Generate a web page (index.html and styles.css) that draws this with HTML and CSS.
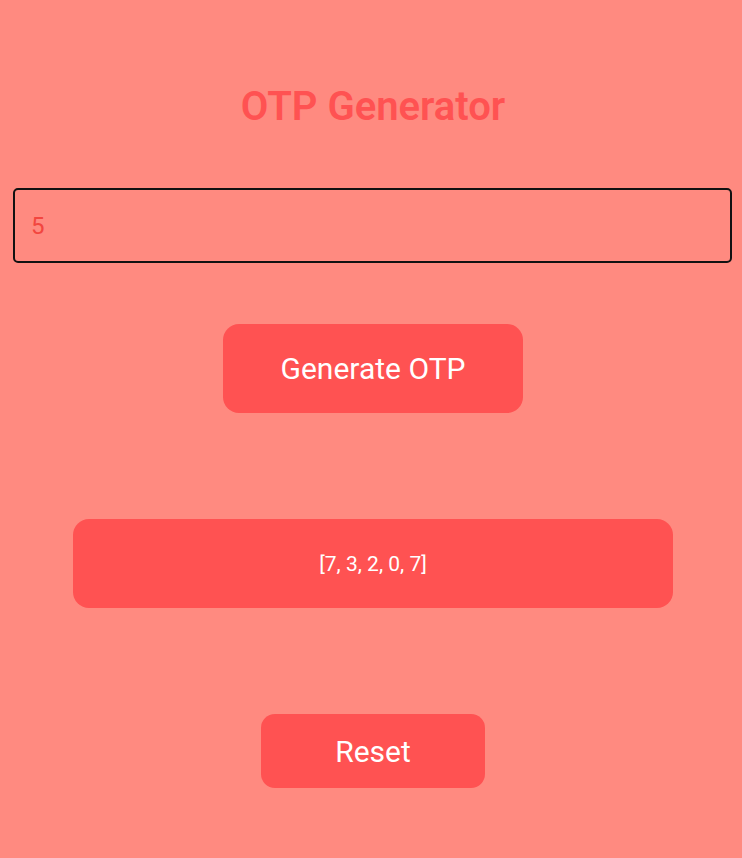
FILE: index.html
```html
<!DOCTYPE html>
<html lang="en">
<head>
<meta charset="utf-8">
<title>OTP Generator</title>
<link rel="stylesheet" href="styles.css">
</head>
<body>
  <main class="app">
    <h1 class="title">OTP Generator</h1>
    <input class="length-input" type="text" value="5">
    <button class="btn btn-generate" type="button">Generate OTP</button>
    <div class="result">[7, 3, 2, 0, 7]</div>
    <button class="btn btn-reset" type="button">Reset</button>
  </main>
</body>
</html>
```

FILE: styles.css
```css
html, body {
  margin: 0;
  padding: 0;
  background: #ff8a80;
  font-family: Roboto, "Noto Sans", "Liberation Sans", sans-serif;
}

.app {
  display: flex;
  flex-direction: column;
  align-items: center;
  min-height: 858px;
  padding-left: 4px;
}

.title {
  margin: 84px 0 0;
  font-size: 40px;
  line-height: 46px;
  font-weight: 600;
  color: #ff5252;
}

.length-input {
  box-sizing: border-box;
  align-self: stretch;
  margin: 58px 10px 0 9px;
  height: 75px;
  padding: 0 16px;
  border: 2px solid #111;
  border-radius: 5px;
  background: transparent;
  font-family: inherit;
  font-size: 24px;
  color: #f2463f;
  outline: none;
}

.btn {
  border: none;
  background: #ff5252;
  color: #fff;
  font-family: inherit;
  font-size: 30px;
  cursor: pointer;
}

.btn-generate {
  margin-top: 61px;
  width: 300px;
  height: 89px;
  border-radius: 16px;
}

.result {
  margin-top: 106px;
  width: 600px;
  height: 89px;
  border-radius: 16px;
  background: #ff5252;
  color: #fff;
  font-size: 21px;
  display: flex;
  align-items: center;
  justify-content: center;
}

.btn-reset {
  margin-top: 106px;
  width: 224px;
  height: 74px;
  border-radius: 14px;
}
```
